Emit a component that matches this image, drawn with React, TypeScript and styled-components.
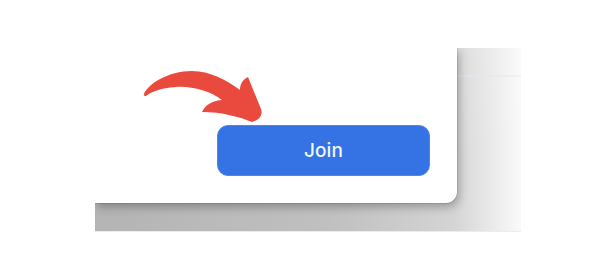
import styled, { createGlobalStyle } from 'styled-components';

const GlobalStyle = createGlobalStyle`
  html, body {
    margin: 0;
    padding: 0;
    background: #ffffff;
  }
  body {
    font-family: Inter, "Liberation Sans", sans-serif;
  }
`;

const Page = styled.div`
  width: 600px;
  height: 279px;
  box-sizing: border-box;
  padding: 48px 0 0 95px;
  background: #ffffff;
`;

const Screen = styled.div`
  position: relative;
  width: 426px;
  height: 183px;
  overflow: hidden;
  display: flex;
  align-items: flex-start;
  background:
    linear-gradient(to bottom, rgba(255, 255, 255, 0.12), rgba(255, 255, 255, 0) 60%),
    linear-gradient(to right, #b4b4b4 0%, #c0c0c0 55%, #d4d4d4 84%, #eeeeee 95%, #fafafa 100%);
  border-bottom: 1px solid #ececec;
`;

const Divider = styled.div`
  position: absolute;
  left: 0;
  right: 0;
  top: 27px;
  height: 2px;
  background: linear-gradient(to right, #d8d8e2, #e0e0ea 80%, rgba(236, 236, 244, 0.6));
`;

const Dialog = styled.div`
  position: relative;
  z-index: 1;
  width: 362px;
  height: 155px;
  box-sizing: border-box;
  display: flex;
  justify-content: flex-end;
  align-items: flex-end;
  padding: 0 27px 27px 0;
  background: #ffffff;
  border-bottom-right-radius: 11px;
  box-shadow: 0 0 0 0.5px rgba(0, 0, 0, 0.18), 2px 4px 10px rgba(0, 0, 0, 0.28);
`;

const JoinButton = styled.button`
  width: 213px;
  height: 51px;
  border: 1px solid #4f86ea;
  border-radius: 11px;
  background: #3572e4;
  color: #f4f6fb;
  font-family: Inter, "Liberation Sans", sans-serif;
  font-size: 19px;
  font-weight: 500;
  letter-spacing: 0.1px;
  cursor: pointer;
  padding: 0 0 1px;
`;

const Arrow = styled.svg`
  position: absolute;
  left: 45px;
  top: 20px;
  width: 126px;
  height: 58px;
  overflow: visible;
`;

const CurvedArrow = () => (
  <Arrow viewBox="140 68 126 58">
    <path
      fill="#e94a3d"
      d="M144 94
         C148 84 168 71 192 71
         C210 71 226 80 240 90
         C240 85 242 80 248 77
         L261 109
         Q264 118 252 122
         C240 117 222 112 202 112
         C205 106 210 101 222 100
         C210 91 192 86 176 87
         C160 88 151 92 146 96
         Q143 96 144 94 Z"
    />
  </Arrow>
);

export default function App() {
  return (
    <>
      <GlobalStyle />
      <Page>
        <Screen>
          <Divider />
          <Dialog>
            <CurvedArrow />
            <JoinButton>Join</JoinButton>
          </Dialog>
        </Screen>
      </Page>
    </>
  );
}
